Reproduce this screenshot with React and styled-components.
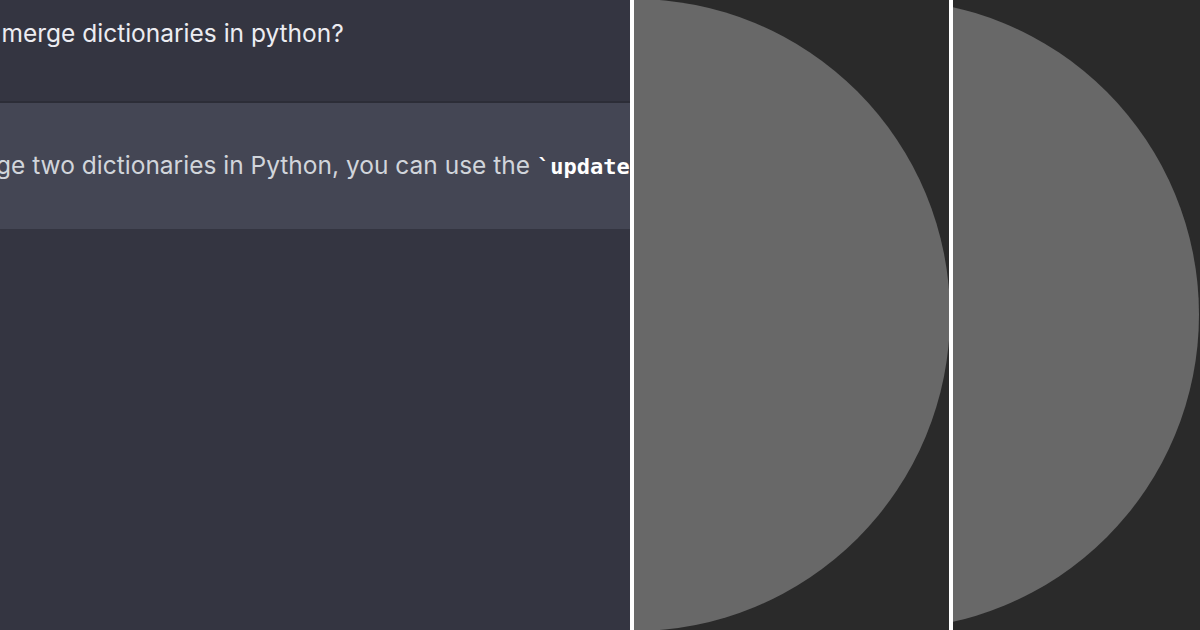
import React from "react";
import styled, { createGlobalStyle } from "styled-components";

const GlobalStyle = createGlobalStyle`
  html, body {
    margin: 0;
    padding: 0;
    background: #2a2a2a;
  }
  #root {
    width: 1200px;
    height: 630px;
  }
`;

export const Page = styled.div`
  width: 1200px;
  height: 630px;
  display: flex;
  flex-flow: row nowrap;
  overflow: hidden;
`;

export const ChatPane = styled.div`
  width: 630px;
  flex: 0 0 630px;
  height: 100%;
  background-color: #343541;
  display: flex;
  flex-direction: column;
  overflow: hidden;
  font-family: Inter, "Noto Sans", sans-serif;
`;

export const QuestionRow = styled.div`
  height: 103px;
  flex: 0 0 103px;
  box-sizing: border-box;
  padding-top: 17px;
  border-bottom: 2px solid #2c2d37;
  color: #ececf1;
  font-size: 24.5px;
  line-height: 32px;
  white-space: nowrap;
`;

export const AnswerRow = styled.div`
  height: 126px;
  flex: 0 0 126px;
  box-sizing: border-box;
  background-color: #444654;
  display: flex;
  align-items: center;
  color: #d1d5db;
  font-size: 24.5px;
  line-height: 32px;
  white-space: nowrap;
`;

export const Line = styled.p`
  margin: 0 0 0 ${(p) => p.$shift}px;
  padding: 0;
`;

export const Code = styled.code`
  font-family: "DejaVu Sans Mono", "Liberation Mono", monospace;
  font-weight: 700;
  color: #ffffff;
  font-size: 22px;
`;

export const Divider = styled.div`
  width: 4px;
  flex: 0 0 4px;
  height: 100%;
  background-color: #ffffff;
`;

export const SlidePane = styled.div`
  width: ${(p) => p.$w}px;
  flex: 0 0 ${(p) => p.$w}px;
  height: 100%;
  background-color: #2a2a2a;
  overflow: hidden;
  & svg {
    display: block;
  }
`;

const Disc = ({ w, cx, cy, r }) => (
  <svg width={w} height="630" viewBox={`0 0 ${w} 630`}>
    <circle cx={cx} cy={cy} r={r} fill="#686868" />
  </svg>
);

export default function App() {
  return (
    <>
      <GlobalStyle />
      <Page>
        <ChatPane>
          <QuestionRow>
            <Line $shift={-108}>How do I merge dictionaries in python?</Line>
          </QuestionRow>
          <AnswerRow>
            <Line $shift={-84}>
              To merge two dictionaries in Python, you can use the{" "}
              <Code>`update()`</Code> method.
            </Line>
          </AnswerRow>
        </ChatPane>
        <Divider />
        <SlidePane $w={315}>
          <Disc w={315} cx={0} cy={315} r={316} />
        </SlidePane>
        <Divider />
        <SlidePane $w={247}>
          <Disc w={247} cx={-69} cy={314.5} r={315} />
        </SlidePane>
      </Page>
    </>
  );
}
